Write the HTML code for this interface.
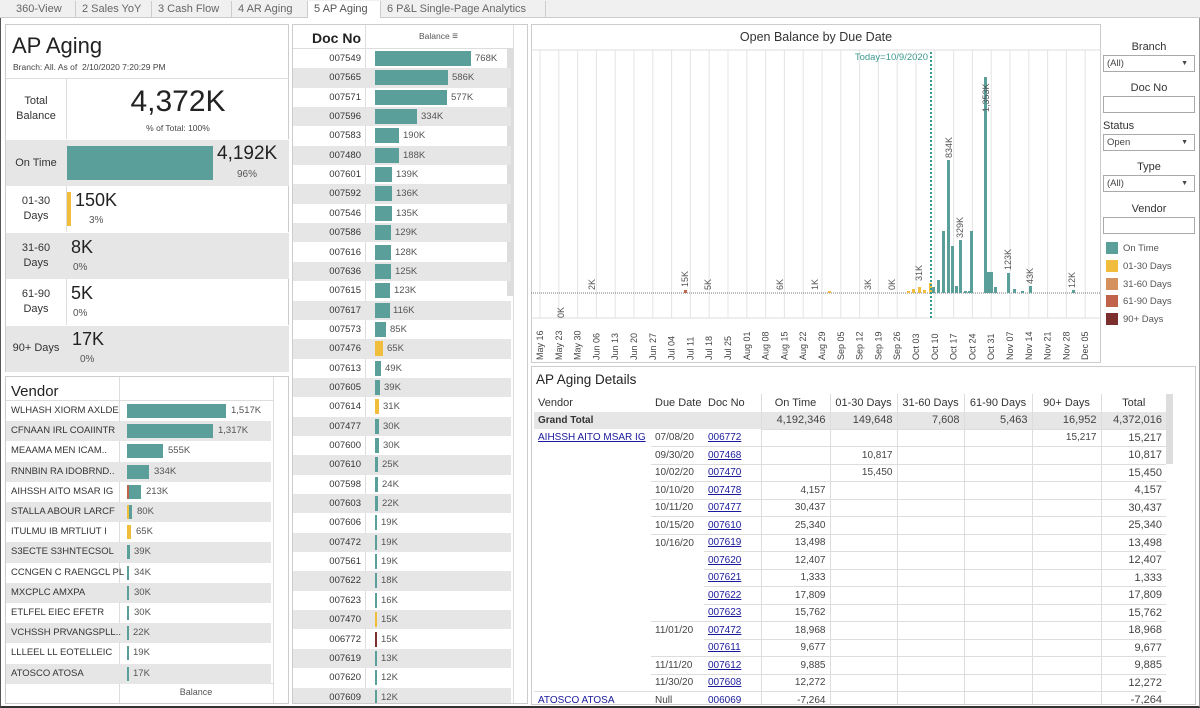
<!DOCTYPE html>
<html><head><meta charset="utf-8">
<style>
*{box-sizing:border-box;margin:0;padding:0}
body{width:1200px;height:708px;overflow:hidden;background:#fff;font-family:"Liberation Sans",sans-serif;color:#333;position:relative}
.a{position:absolute}
.tabs{left:0;top:0;width:1200px;height:18px;background:#f0f0f0;border-bottom:1px solid #ccc}
.tab{position:absolute;top:1px;height:17px;font-size:11px;color:#666;line-height:16px;padding-left:6px;border-right:1px solid #ccc}
.tab.on{background:#fff;color:#555}
.panel{border:1px solid #ccc;background:#fff}
.lbl{position:absolute;left:0;width:60px;text-align:center;font-size:11px;color:#333;line-height:15px}
.row{position:absolute;left:0;width:283px;border-top:1px solid #fff}
.g{background:#e6e6e6}
.big{position:absolute;font-size:18px;color:#222}
.pct{position:absolute;font-size:10px;color:#555}
.vr{position:absolute;left:0;width:265px;height:20.2px;font-size:9.5px;line-height:20px;color:#333}
.vr span.n{position:absolute;left:5px}
.vr i{position:absolute;top:3px;height:14px;background:#5b9f9a}
.vr b{position:absolute;font-weight:normal;color:#555;font-size:9.5px}
.dr{position:absolute;left:0;width:218px;height:19.35px;font-size:9.5px;line-height:19px}
.dr span.n{position:absolute;right:150px;color:#333}
.dr i{position:absolute;left:82px;top:2px;height:15px;background:#5b9f9a}
.dr b{position:absolute;font-weight:normal;color:#555}
.sel{position:absolute;left:1103px;width:92px;height:17px;border:1px solid #aaa;background:#fff;font-size:9.5px;line-height:15px;padding-left:3px;color:#444}
.sel:after{content:"▼";position:absolute;right:6px;top:0;font-size:7px}
.inp{position:absolute;left:1103px;width:92px;height:17px;border:1px solid #aaa;background:#fff}
.fl{position:absolute;left:1103px;width:92px;text-align:center;font-size:11px;color:#333}
.lg{position:absolute;left:1106px;font-size:9.5px;color:#555;line-height:13px}
.lg i{display:inline-block;width:12px;height:12px;vertical-align:top;margin-right:5px}
table{border-collapse:collapse;font-size:10px;table-layout:fixed}
td{height:17.5px;padding:0 4px;white-space:nowrap;overflow:hidden;color:#444}
td.r{text-align:right;border-left:1px solid #ddd;border-bottom:1px solid #ddd}
td.d{border-bottom:1px solid #ddd}
td.t{font-size:11px;color:#333}
a{color:#1a1a9c;text-decoration:underline}
</style></head><body>
<div class="a" style="left:0;top:0;width:1200px;height:708px;border-left:1px solid #555;border-bottom:2px solid #333;border-right:1px solid #999"></div>
<div class="a tabs">
<div class="tab" style="left:10px;width:66px">360-View</div>
<div class="tab" style="left:76px;width:76px">2 Sales YoY</div>
<div class="tab" style="left:152px;width:80px">3 Cash Flow</div>
<div class="tab" style="left:232px;width:76px">4 AR Aging</div>
<div class="tab on" style="left:308px;width:73px">5 AP Aging</div>
<div class="tab" style="left:381px;width:165px">6 P&amp;L Single-Page Analytics</div>
</div>

<!-- KPI panel -->
<div class="a panel" style="left:5px;top:24px;width:284px;height:348px">
<div class="a" style="left:6px;top:8px;font-size:22px;color:#222">AP Aging</div>
<div class="a" style="left:7px;top:37px;font-size:8.5px;color:#444">Branch: All. As of &nbsp;2/10/2020 7:20:29 PM</div>
<div class="row" style="top:53px;height:61px;border-top:1px solid #ddd"></div>
<div class="lbl" style="top:69px">Total<br>Balance</div>
<div class="a" style="left:60px;top:53px;width:1px;height:294px;background:#ddd"></div>
<div class="a" style="left:60px;top:60px;width:224px;text-align:center;font-size:30px;color:#222">4,372K</div>
<div class="a" style="left:60px;top:98px;width:224px;text-align:center;font-size:8.5px;color:#444">% of Total: 100%</div>
<div class="row g" style="top:114px;height:47px"></div>
<div class="lbl" style="top:131px">On Time</div>
<div class="a" style="left:61px;top:121px;width:146px;height:34px;background:#5b9f9a"></div>
<div class="big" style="left:211px;top:118px;font-size:19px">4,192K</div>
<div class="pct" style="left:231px;top:144px">96%</div>
<div class="lbl" style="top:169px">01-30<br>Days</div>
<div class="a" style="left:61px;top:167px;width:4px;height:34px;background:#f0be3c"></div>
<div class="big" style="left:69px;top:165px">150K</div>
<div class="pct" style="left:83px;top:190px">3%</div>
<div class="row g" style="top:207px;height:47px"></div>
<div class="lbl" style="top:216px">31-60<br>Days</div>
<div class="big" style="left:65px;top:212px">8K</div>
<div class="pct" style="left:67px;top:237px">0%</div>
<div class="lbl" style="top:262px">61-90<br>Days</div>
<div class="big" style="left:65px;top:258px">5K</div>
<div class="pct" style="left:67px;top:283px">0%</div>
<div class="row g" style="top:300px;height:47px"></div>
<div class="lbl" style="top:316px">90+ Days</div>
<div class="big" style="left:66px;top:304px">17K</div>
<div class="pct" style="left:74px;top:329px">0%</div>
</div>

<!-- Vendor panel -->
<div class="a panel" style="left:5px;top:376px;width:284px;height:328px">
<div class="a" style="left:5px;top:6px;font-size:15px;color:#222">Vendor</div>
<div class="a" style="left:113px;top:0;width:1px;height:326px;background:#ddd"></div>
<div class="a" style="left:267px;top:0;width:1px;height:326px;background:#ddd"></div>
<div class="a" style="left:0;top:23px;width:267px;height:1px;background:#ddd"></div>
<div class="a" style="left:0;top:306px;width:267px;height:1px;background:#ddd"></div>
<div class="a" style="left:113px;top:310px;width:154px;text-align:center;font-size:9px;color:#555">Balance</div>
<div class="a" style="left:0;top:24px">
<div class="vr" style="top:0"><span class="n">WLHASH XIORM AXLDE</span><i style="left:121px;width:99px"></i><b style="left:225px">1,517K</b></div>
<div class="vr g" style="top:20.2px"><span class="n">CFNAAN IRL COAIINTR</span><i style="left:121px;width:86px"></i><b style="left:212px">1,317K</b></div>
<div class="vr" style="top:40.4px"><span class="n">MEAAMA MEN ICAM..</span><i style="left:121px;width:36px"></i><b style="left:162px">555K</b></div>
<div class="vr g" style="top:60.6px"><span class="n">RNNBIN RA IDOBRND..</span><i style="left:121px;width:22px"></i><b style="left:148px">334K</b></div>
<div class="vr" style="top:80.8px"><span class="n">AIHSSH AITO MSAR IG</span><i style="left:121px;width:14px"></i><i style="left:121px;width:2px;background:#c0634a"></i><b style="left:140px">213K</b></div>
<div class="vr g" style="top:101px"><span class="n">STALLA ABOUR LARCF</span><i style="left:121px;width:5px"></i><i style="left:121px;width:2px;background:#f0be3c"></i><b style="left:131px">80K</b></div>
<div class="vr" style="top:121.2px"><span class="n">ITULMU IB MRTLIUT I</span><i style="left:121px;width:4px;background:#f0be3c"></i><b style="left:130px">65K</b></div>
<div class="vr g" style="top:141.4px"><span class="n">S3ECTE S3HNTECSOL</span><i style="left:121px;width:2.5px"></i><b style="left:128px">39K</b></div>
<div class="vr" style="top:161.6px"><span class="n">CCNGEN C RAENGCL PL</span><i style="left:121px;width:2px"></i><b style="left:128px">34K</b></div>
<div class="vr g" style="top:181.8px"><span class="n">MXCPLC AMXPA</span><i style="left:121px;width:2px"></i><b style="left:128px">30K</b></div>
<div class="vr" style="top:202px"><span class="n">ETLFEL EIEC EFETR</span><i style="left:121px;width:2px"></i><b style="left:128px">30K</b></div>
<div class="vr g" style="top:222.2px"><span class="n">VCHSSH PRVANGSPLL..</span><i style="left:121px;width:1.5px"></i><b style="left:127px">22K</b></div>
<div class="vr" style="top:242.4px"><span class="n">LLLEEL LL EOTELLEIC</span><i style="left:121px;width:1.5px"></i><b style="left:127px">19K</b></div>
<div class="vr g" style="top:262.6px"><span class="n">ATOSCO ATOSA</span><i style="left:121px;width:1.5px"></i><b style="left:127px">17K</b></div>
</div>
</div>

<!-- Doc No panel -->
<div class="a panel" style="left:292px;top:24px;width:236px;height:680px;overflow:hidden">
<div class="a" style="left:8px;top:5px;width:60px;text-align:right;font-size:14px;font-weight:bold;color:#222">Doc No</div>
<div class="a" style="left:72px;top:0;width:1px;height:680px;background:#ddd"></div>
<div class="a" style="left:220px;top:0;width:1px;height:680px;background:#ddd"></div>
<div class="a" style="left:0;top:23px;width:220px;height:1px;background:#ddd"></div>
<div class="a" style="left:126px;top:6px;font-size:8.5px;color:#555">Balance <span style="font-size:10px">&#8801;</span></div>
<div class="a" style="left:214px;top:24px;width:6px;height:247px;background:#ddd"></div>
<div class="a" style="left:0;top:24px">
<div class="dr" style="top:0"><span class="n">007549</span><i style="width:96px"></i><b style="left:182px">768K</b></div>
<div class="dr g" style="top:19.35px"><span class="n">007565</span><i style="width:73px"></i><b style="left:159px">586K</b></div>
<div class="dr" style="top:38.7px"><span class="n">007571</span><i style="width:72px"></i><b style="left:158px">577K</b></div>
<div class="dr g" style="top:58.05px"><span class="n">007596</span><i style="width:42px"></i><b style="left:128px">334K</b></div>
<div class="dr" style="top:77.4px"><span class="n">007583</span><i style="width:24px"></i><b style="left:110px">190K</b></div>
<div class="dr g" style="top:96.75px"><span class="n">007480</span><i style="width:23.5px"></i><b style="left:110px">188K</b></div>
<div class="dr" style="top:116.1px"><span class="n">007601</span><i style="width:17px"></i><b style="left:103px">139K</b></div>
<div class="dr g" style="top:135.45px"><span class="n">007592</span><i style="width:17px"></i><b style="left:103px">136K</b></div>
<div class="dr" style="top:154.8px"><span class="n">007546</span><i style="width:17px"></i><b style="left:103px">135K</b></div>
<div class="dr g" style="top:174.15px"><span class="n">007586</span><i style="width:16px"></i><b style="left:102px">129K</b></div>
<div class="dr" style="top:193.5px"><span class="n">007616</span><i style="width:16px"></i><b style="left:102px">128K</b></div>
<div class="dr g" style="top:212.85px"><span class="n">007636</span><i style="width:16px"></i><b style="left:102px">125K</b></div>
<div class="dr" style="top:232.2px"><span class="n">007615</span><i style="width:15px"></i><b style="left:101px">123K</b></div>
<div class="dr g" style="top:251.55px"><span class="n">007617</span><i style="width:14.5px"></i><b style="left:100px">116K</b></div>
<div class="dr" style="top:270.9px"><span class="n">007573</span><i style="width:11px"></i><b style="left:97px">85K</b></div>
<div class="dr g" style="top:290.25px"><span class="n">007476</span><i style="width:8px;background:#f0be3c"></i><b style="left:94px">65K</b></div>
<div class="dr" style="top:309.6px"><span class="n">007613</span><i style="width:6px"></i><b style="left:92px">49K</b></div>
<div class="dr g" style="top:328.95px"><span class="n">007605</span><i style="width:5px"></i><b style="left:91px">39K</b></div>
<div class="dr" style="top:348.3px"><span class="n">007614</span><i style="width:4px;background:#f0be3c"></i><b style="left:90px">31K</b></div>
<div class="dr g" style="top:367.65px"><span class="n">007477</span><i style="width:4px"></i><b style="left:90px">30K</b></div>
<div class="dr" style="top:387px"><span class="n">007600</span><i style="width:4px"></i><b style="left:90px">30K</b></div>
<div class="dr g" style="top:406.35px"><span class="n">007610</span><i style="width:3px"></i><b style="left:89px">25K</b></div>
<div class="dr" style="top:425.7px"><span class="n">007598</span><i style="width:3px"></i><b style="left:89px">24K</b></div>
<div class="dr g" style="top:445.05px"><span class="n">007603</span><i style="width:3px"></i><b style="left:89px">22K</b></div>
<div class="dr" style="top:464.4px"><span class="n">007606</span><i style="width:2.4px"></i><b style="left:88px">19K</b></div>
<div class="dr g" style="top:483.75px"><span class="n">007472</span><i style="width:2.4px"></i><b style="left:88px">19K</b></div>
<div class="dr" style="top:503.1px"><span class="n">007561</span><i style="width:2.4px"></i><b style="left:88px">19K</b></div>
<div class="dr g" style="top:522.45px"><span class="n">007622</span><i style="width:2px"></i><b style="left:88px">18K</b></div>
<div class="dr" style="top:541.8px"><span class="n">007623</span><i style="width:2px"></i><b style="left:88px">16K</b></div>
<div class="dr g" style="top:561.15px"><span class="n">007470</span><i style="width:2px;background:#f0be3c"></i><b style="left:88px">15K</b></div>
<div class="dr" style="top:580.5px"><span class="n">006772</span><i style="width:2px;background:#7a2e2e"></i><b style="left:88px">15K</b></div>
<div class="dr g" style="top:599.85px"><span class="n">007619</span><i style="width:2px"></i><b style="left:88px">13K</b></div>
<div class="dr" style="top:619.2px"><span class="n">007620</span><i style="width:1.5px"></i><b style="left:88px">12K</b></div>
<div class="dr g" style="top:638.55px"><span class="n">007609</span><i style="width:1.5px"></i><b style="left:88px">12K</b></div>
</div>
</div>

<!-- Chart panel -->
<div class="a panel" style="left:531px;top:24px;width:570px;height:339px"></div>
<svg class="a" style="left:531px;top:24px" width="570" height="339" font-family="Liberation Sans" font-size="9">
<text x="285" y="17" text-anchor="middle" font-size="12.5" fill="#333">Open Balance by Due Date</text>
<line x1="0" y1="26" x2="570" y2="26" stroke="#ddd"/>
<line x1="0" y1="294" x2="570" y2="294" stroke="#ddd"/>
<g stroke="#e4e4e4">
<line x1="9" y1="26" x2="9" y2="294"/><line x1="27.8" y1="26" x2="27.8" y2="294"/><line x1="46.6" y1="26" x2="46.6" y2="294"/><line x1="65.4" y1="26" x2="65.4" y2="294"/><line x1="84.2" y1="26" x2="84.2" y2="294"/><line x1="103" y1="26" x2="103" y2="294"/><line x1="121.8" y1="26" x2="121.8" y2="294"/><line x1="140.6" y1="26" x2="140.6" y2="294"/><line x1="159.4" y1="26" x2="159.4" y2="294"/><line x1="178.2" y1="26" x2="178.2" y2="294"/><line x1="197" y1="26" x2="197" y2="294"/><line x1="215.8" y1="26" x2="215.8" y2="294"/><line x1="234.6" y1="26" x2="234.6" y2="294"/><line x1="253.4" y1="26" x2="253.4" y2="294"/><line x1="272.2" y1="26" x2="272.2" y2="294"/><line x1="291" y1="26" x2="291" y2="294"/><line x1="309.8" y1="26" x2="309.8" y2="294"/><line x1="328.6" y1="26" x2="328.6" y2="294"/><line x1="347.4" y1="26" x2="347.4" y2="294"/><line x1="366.2" y1="26" x2="366.2" y2="294"/><line x1="385" y1="26" x2="385" y2="294"/><line x1="403.8" y1="26" x2="403.8" y2="294"/><line x1="422.6" y1="26" x2="422.6" y2="294"/><line x1="441.4" y1="26" x2="441.4" y2="294"/><line x1="460.2" y1="26" x2="460.2" y2="294"/><line x1="479" y1="26" x2="479" y2="294"/><line x1="497.8" y1="26" x2="497.8" y2="294"/><line x1="516.6" y1="26" x2="516.6" y2="294"/><line x1="535.4" y1="26" x2="535.4" y2="294"/><line x1="554.2" y1="26" x2="554.2" y2="294"/>
</g>
<line x1="0" y1="269" x2="570" y2="269" stroke="#777" stroke-dasharray="1,1"/>
<g fill="#f0be3c"><rect x="376" y="267" width="3" height="2"/><rect x="381" y="265" width="3" height="4"/><rect x="387" y="263" width="3" height="6"/><rect x="392" y="266" width="3" height="3"/><rect x="398" y="259" width="3" height="10"/><rect x="297" y="267" width="3" height="2"/></g>
<g fill="#5b9f9a">
<rect x="401" y="263" width="3" height="6"/><rect x="406" y="256" width="3" height="13"/><rect x="411" y="207" width="3" height="62"/><rect x="416" y="136" width="3" height="133"/><rect x="420" y="222" width="3" height="47"/><rect x="424" y="262" width="3" height="7"/><rect x="428" y="216" width="3" height="53"/><rect x="433" y="267" width="3" height="2"/><rect x="437" y="267" width="3" height="2"/><rect x="439" y="207" width="3" height="62"/><rect x="453" y="53" width="3" height="216"/><rect x="456" y="248" width="3" height="21"/><rect x="459" y="248" width="3" height="21"/><rect x="463" y="263" width="3" height="6"/><rect x="476" y="249" width="3" height="20"/><rect x="482" y="265" width="3" height="4"/><rect x="490" y="267" width="3" height="2"/><rect x="498" y="262" width="3" height="7"/><rect x="541" y="266" width="3" height="3"/></g>
<rect x="153" y="266" width="3" height="3" fill="#c0634a"/>
<line x1="400" y1="28" x2="400" y2="294" stroke="#3d9a8f" stroke-width="2" stroke-dasharray="2,2"/>
<text x="397" y="36" text-anchor="end" fill="#3d9a8f" font-size="9.5">Today=10/9/2020</text>
<g fill="#555" font-size="9">
<text transform="translate(33,283) rotate(-90)" text-anchor="end">0K</text>
<text transform="translate(64,266) rotate(-90)">2K</text>
<text transform="translate(157,263) rotate(-90)">15K</text>
<text transform="translate(180,266) rotate(-90)">5K</text>
<text transform="translate(252,266) rotate(-90)">6K</text>
<text transform="translate(287,266) rotate(-90)">1K</text>
<text transform="translate(340,266) rotate(-90)">3K</text>
<text transform="translate(364,266) rotate(-90)">0K</text>
<text transform="translate(391,257) rotate(-90)">31K</text>
<text transform="translate(421,134) rotate(-90)">834K</text>
<text transform="translate(432,214) rotate(-90)">329K</text>
<text transform="translate(458,88) rotate(-90)">1,353K</text>
<text transform="translate(480,246) rotate(-90)">123K</text>
<text transform="translate(502,260) rotate(-90)">43K</text>
<text transform="translate(544,264) rotate(-90)">12K</text>
</g>
<g fill="#444" font-size="9">
<text transform="translate(12,336) rotate(-90)">May 16</text><text transform="translate(30.8,336) rotate(-90)">May 23</text><text transform="translate(49.6,336) rotate(-90)">May 30</text><text transform="translate(68.4,336) rotate(-90)">Jun 06</text><text transform="translate(87.2,336) rotate(-90)">Jun 13</text><text transform="translate(106,336) rotate(-90)">Jun 20</text><text transform="translate(124.8,336) rotate(-90)">Jun 27</text><text transform="translate(143.6,336) rotate(-90)">Jul 04</text><text transform="translate(162.4,336) rotate(-90)">Jul 11</text><text transform="translate(181.2,336) rotate(-90)">Jul 18</text><text transform="translate(200,336) rotate(-90)">Jul 25</text><text transform="translate(218.8,336) rotate(-90)">Aug 01</text><text transform="translate(237.6,336) rotate(-90)">Aug 08</text><text transform="translate(256.4,336) rotate(-90)">Aug 15</text><text transform="translate(275.2,336) rotate(-90)">Aug 22</text><text transform="translate(294,336) rotate(-90)">Aug 29</text><text transform="translate(312.8,336) rotate(-90)">Sep 05</text><text transform="translate(331.6,336) rotate(-90)">Sep 12</text><text transform="translate(350.4,336) rotate(-90)">Sep 19</text><text transform="translate(369.2,336) rotate(-90)">Sep 26</text><text transform="translate(388,336) rotate(-90)">Oct 03</text><text transform="translate(406.8,336) rotate(-90)">Oct 10</text><text transform="translate(425.6,336) rotate(-90)">Oct 17</text><text transform="translate(444.4,336) rotate(-90)">Oct 24</text><text transform="translate(463.2,336) rotate(-90)">Oct 31</text><text transform="translate(482,336) rotate(-90)">Nov 07</text><text transform="translate(500.8,336) rotate(-90)">Nov 14</text><text transform="translate(519.6,336) rotate(-90)">Nov 21</text><text transform="translate(538.4,336) rotate(-90)">Nov 28</text><text transform="translate(557.2,336) rotate(-90)">Dec 05</text>
</g>
</svg>

<!-- Filters -->
<div class="fl" style="top:41px">Branch</div>
<div class="sel" style="top:55px">(All)</div>
<div class="fl" style="top:82px">Doc No</div>
<div class="inp" style="top:96px"></div>
<div class="fl" style="top:120px;text-align:left">Status</div>
<div class="sel" style="top:134px">Open</div>
<div class="fl" style="top:161px">Type</div>
<div class="sel" style="top:175px">(All)</div>
<div class="fl" style="top:203px">Vendor</div>
<div class="inp" style="top:217px"></div>
<div class="lg" style="top:242px"><i style="background:#5b9f9a"></i>On Time</div>
<div class="lg" style="top:260px"><i style="background:#f0be3c"></i>01-30 Days</div>
<div class="lg" style="top:278px"><i style="background:#d4915f"></i>31-60 Days</div>
<div class="lg" style="top:295px"><i style="background:#c0634a"></i>61-90 Days</div>
<div class="lg" style="top:313px"><i style="background:#7a2e2e"></i>90+ Days</div>

<!-- Details -->
<div class="a panel" style="left:531px;top:366px;width:665px;height:339px;overflow:hidden">
<div class="a" style="left:4px;top:5px;font-size:13.5px;color:#222">AP Aging Details</div>
<div class="a" style="left:634px;top:27px;width:7px;height:70px;background:#ddd"></div>
<table class="a" style="left:2px;top:27px;width:632px">
<colgroup><col style="width:117px"><col style="width:53px"><col style="width:57px"><col style="width:69px"><col style="width:67px"><col style="width:67px"><col style="width:68px"><col style="width:69px"><col style="width:65px"></colgroup>
<tr><td class="t">Vendor</td><td class="t">Due Date</td><td class="t">Doc No</td><td class="t" style="text-align:center;border-left:1px solid #ddd">On Time</td><td class="t" style="text-align:center;border-left:1px solid #ddd">01-30 Days</td><td class="t" style="text-align:center;border-left:1px solid #ddd">31-60 Days</td><td class="t" style="text-align:center;border-left:1px solid #ddd">61-90 Days</td><td class="t" style="text-align:center;border-left:1px solid #ddd">90+ Days</td><td class="t" style="text-align:center;border-left:1px solid #ddd">Total</td></tr>
<tr style="background:#e6e6e6"><td style="font-weight:bold;color:#333">Grand Total</td><td></td><td></td><td class="r" style="font-size:11px">4,192,346</td><td class="r" style="font-size:11px">149,648</td><td class="r" style="font-size:11px">7,608</td><td class="r" style="font-size:11px">5,463</td><td class="r" style="font-size:11px">16,952</td><td class="r" style="font-size:11px">4,372,016</td></tr>
<tr><td><a>AIHSSH AITO MSAR IG</a></td><td class="d">07/08/20</td><td class="d"><a>006772</a></td><td class="r"></td><td class="r"></td><td class="r"></td><td class="r"></td><td class="r">15,217</td><td class="r" style="font-size:11px">15,217</td></tr>
<tr><td></td><td class="d">09/30/20</td><td class="d"><a>007468</a></td><td class="r"></td><td class="r">10,817</td><td class="r"></td><td class="r"></td><td class="r"></td><td class="r" style="font-size:11px">10,817</td></tr>
<tr><td></td><td class="d">10/02/20</td><td class="d"><a>007470</a></td><td class="r"></td><td class="r">15,450</td><td class="r"></td><td class="r"></td><td class="r"></td><td class="r" style="font-size:11px">15,450</td></tr>
<tr><td></td><td class="d">10/10/20</td><td class="d"><a>007478</a></td><td class="r">4,157</td><td class="r"></td><td class="r"></td><td class="r"></td><td class="r"></td><td class="r" style="font-size:11px">4,157</td></tr>
<tr><td></td><td class="d">10/11/20</td><td class="d"><a>007477</a></td><td class="r">30,437</td><td class="r"></td><td class="r"></td><td class="r"></td><td class="r"></td><td class="r" style="font-size:11px">30,437</td></tr>
<tr><td></td><td class="d">10/15/20</td><td class="d"><a>007610</a></td><td class="r">25,340</td><td class="r"></td><td class="r"></td><td class="r"></td><td class="r"></td><td class="r" style="font-size:11px">25,340</td></tr>
<tr><td></td><td>10/16/20</td><td class="d"><a>007619</a></td><td class="r">13,498</td><td class="r"></td><td class="r"></td><td class="r"></td><td class="r"></td><td class="r" style="font-size:11px">13,498</td></tr>
<tr><td></td><td></td><td class="d"><a>007620</a></td><td class="r">12,407</td><td class="r"></td><td class="r"></td><td class="r"></td><td class="r"></td><td class="r" style="font-size:11px">12,407</td></tr>
<tr><td></td><td></td><td class="d"><a>007621</a></td><td class="r">1,333</td><td class="r"></td><td class="r"></td><td class="r"></td><td class="r"></td><td class="r" style="font-size:11px">1,333</td></tr>
<tr><td></td><td></td><td class="d"><a>007622</a></td><td class="r">17,809</td><td class="r"></td><td class="r"></td><td class="r"></td><td class="r"></td><td class="r" style="font-size:11px">17,809</td></tr>
<tr><td></td><td class="d"></td><td class="d"><a>007623</a></td><td class="r">15,762</td><td class="r"></td><td class="r"></td><td class="r"></td><td class="r"></td><td class="r" style="font-size:11px">15,762</td></tr>
<tr><td></td><td>11/01/20</td><td class="d"><a>007472</a></td><td class="r">18,968</td><td class="r"></td><td class="r"></td><td class="r"></td><td class="r"></td><td class="r" style="font-size:11px">18,968</td></tr>
<tr><td></td><td class="d"></td><td class="d"><a>007611</a></td><td class="r">9,677</td><td class="r"></td><td class="r"></td><td class="r"></td><td class="r"></td><td class="r" style="font-size:11px">9,677</td></tr>
<tr><td></td><td class="d">11/11/20</td><td class="d"><a>007612</a></td><td class="r">9,885</td><td class="r"></td><td class="r"></td><td class="r"></td><td class="r"></td><td class="r" style="font-size:11px">9,885</td></tr>
<tr><td class="d"></td><td class="d">11/30/20</td><td class="d"><a>007608</a></td><td class="r">12,272</td><td class="r"></td><td class="r"></td><td class="r"></td><td class="r"></td><td class="r" style="font-size:11px">12,272</td></tr>
<tr><td><a>ATOSCO ATOSA</a></td><td>Null</td><td><a>006069</a></td><td class="r">-7,264</td><td class="r"></td><td class="r"></td><td class="r"></td><td class="r"></td><td class="r" style="font-size:11px">-7,264</td></tr>
</table>
</div>
</body></html>
